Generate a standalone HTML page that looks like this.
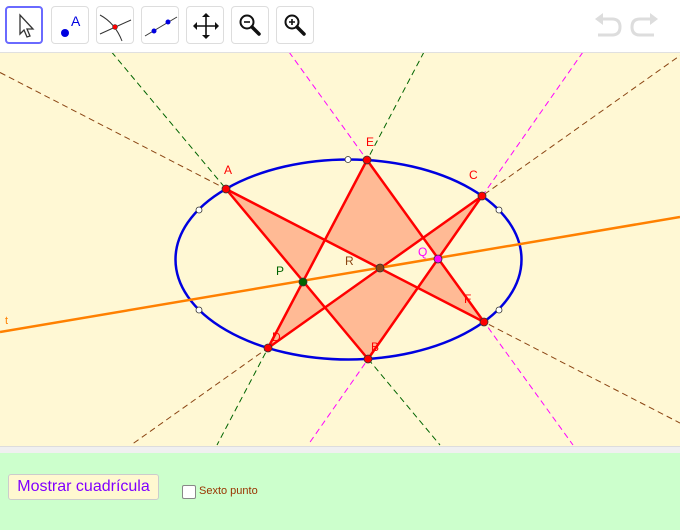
<!DOCTYPE html>
<html><head><meta charset="utf-8"><style>
body{margin:0;width:680px;height:530px;overflow:hidden;font-family:"Liberation Sans",sans-serif;background:#fff;position:relative}
.tb{position:absolute;left:0;top:0;width:680px;height:52px;background:#fff;border-bottom:1px solid #e0e0e0}
.b{position:absolute;top:6px;width:38px;height:38px;border:1px solid #ddd;border-radius:4px;box-sizing:border-box;background:#fff}
.b svg{position:absolute;left:0;top:0}
</style></head><body>
<div class="tb">
<div class="b" style="left:5px;border:2px solid #6a6aff"><svg width="34" height="34"><path d="M13 7 L13 26 L17 22 L20 29 L23 28 L20 21 L26 21 Z" fill="#fff" stroke="#333" stroke-width="1.3"/></svg></div>
<div class="b" style="left:51px"><svg width="38" height="38"><circle cx="13" cy="26" r="4" fill="#0000e0"/><text x="19" y="19" font-size="14" fill="#0000e0" font-family="Liberation Sans">A</text></svg></div>
<div class="b" style="left:96px"><svg width="38" height="38"><path d="M3 8 Q18 16 25 34" stroke="#333" fill="none"/><path d="M3 27 L34 13" stroke="#333"/><circle cx="18" cy="20" r="2.5" fill="red" stroke="#333" stroke-width=".5"/></svg></div>
<div class="b" style="left:141px"><svg width="38" height="38"><path d="M3 29 L35 10" stroke="#333"/><circle cx="12" cy="24" r="2.5" fill="#0000e0"/><circle cx="26" cy="15" r="2.5" fill="#0000e0"/></svg></div>
<div class="b" style="left:186px"><svg width="38" height="38"><path d="M19 8 V30 M8 19 H30" stroke="#111" stroke-width="1.6"/><path d="M19 6 l-4 4 h8z M19 32 l-4 -4 h8z M6 19 l4 -4 v8z M32 19 l-4 -4 v8z" fill="#111"/></svg></div>
<div class="b" style="left:231px"><svg width="38" height="38"><circle cx="15" cy="15" r="6.5" fill="none" stroke="#111" stroke-width="2"/><path d="M12 15 h6" stroke="#111" stroke-width="1.6"/><path d="M20 20 L27 27" stroke="#111" stroke-width="3.5" stroke-linecap="round"/></svg></div>
<div class="b" style="left:276px"><svg width="38" height="38"><circle cx="15" cy="15" r="6.5" fill="none" stroke="#111" stroke-width="2"/><path d="M12 15 h6 M15 12 v6" stroke="#111" stroke-width="1.6"/><path d="M20 20 L27 27" stroke="#111" stroke-width="3.5" stroke-linecap="round"/></svg></div>
<svg style="position:absolute;left:590px;top:10px" width="80" height="32"><path d="M10 9 H22 Q30 9 30 17 Q30 25 22 25 H8" fill="none" stroke="#ddd" stroke-width="3"/><path d="M5 9 l8 -6 v12z" fill="#ddd"/><path d="M60 9 H50 Q42 9 42 17 Q42 25 50 25 H64" fill="none" stroke="#ddd" stroke-width="3"/><path d="M68 9 l-8 -6 v12z" fill="#ddd"/></svg>
</div>
<svg style="position:absolute;left:0;top:53px" width="680" height="393" viewBox="0 53 680 393">
<rect x="0" y="53" width="680" height="393" fill="#fff8d4"/>
<g stroke-dasharray="6,4" stroke-width="1" fill="none">
<line x1="0" y1="72.5" x2="680" y2="423" stroke="#8b4513"/>
<line x1="685" y1="52" x2="131" y2="445" stroke="#8b4513"/>
<line x1="111.6" y1="52" x2="440" y2="445" stroke="#006400"/>
<line x1="424" y1="52" x2="217" y2="445" stroke="#006400"/>
<line x1="289" y1="52" x2="573" y2="445" stroke="#ff00ff"/>
<line x1="583" y1="52" x2="308" y2="445" stroke="#ff00ff"/>
</g>
<polygon points="226,189 484,322 367,160 268,348 482,196 368,359" fill="#ffa07a" fill-opacity=".7" fill-rule="evenodd" stroke="red" stroke-width="2.5" stroke-linejoin="round"/>
<ellipse cx="348.5" cy="259.5" rx="173" ry="100" fill="none" stroke="#0000e0" stroke-width="2.5"/>
<line x1="0" y1="332" x2="680" y2="217" stroke="#ff8000" stroke-width="2.5"/>
<g fill="#fff" stroke="#333" stroke-width=".8">
<circle cx="348" cy="159.5" r="3"/><circle cx="199" cy="210" r="3"/><circle cx="499" cy="210" r="3"/><circle cx="199" cy="310" r="3"/><circle cx="499" cy="310" r="3"/>
</g>
<g fill="red" stroke="#333" stroke-width=".8">
<circle cx="226" cy="189" r="4"/><circle cx="367" cy="160" r="4"/><circle cx="482" cy="196" r="4"/><circle cx="484" cy="322" r="4"/><circle cx="368" cy="359" r="4"/><circle cx="268" cy="348" r="4"/>
</g>
<circle cx="303" cy="282" r="4" fill="#006400" stroke="#333" stroke-width=".8"/>
<circle cx="380" cy="268" r="4" fill="#8b4513" stroke="#333" stroke-width=".8"/>
<circle cx="438" cy="259" r="4" fill="#ff00ff" stroke="#333" stroke-width=".8"/>
<g font-family="Liberation Sans" font-size="12">
<text x="224" y="174" fill="red">A</text><text x="366" y="146" fill="red">E</text><text x="469" y="179" fill="red">C</text><text x="464" y="303" fill="red">F</text><text x="371" y="351" fill="red">B</text><text x="272" y="341" fill="red">D</text>
<text x="276" y="275" fill="#006400">P</text><text x="345" y="265" fill="#8b4513">R</text><text x="418" y="256" fill="#ff00ff">Q</text><text x="5" y="324" fill="#ff8000" font-size="11">t</text>
</g>
</svg>
<div style="position:absolute;left:0;top:446px;width:680px;height:7px;background:#f0f0f0;border-top:1px solid #ddd;box-sizing:border-box"></div>
<div style="position:absolute;left:0;top:453px;width:680px;height:77px;background:#ccffcc"></div>
<div style="position:absolute;left:8px;top:474px;width:151px;height:26px;box-sizing:border-box;background:#fff8d0;border:1px solid #ccc;border-radius:3px;color:#8000ff;font-size:16px;line-height:24px;text-align:center">Mostrar cuadrícula</div>
<div style="position:absolute;left:182px;top:485px;width:12px;height:12px;border:1.5px solid #888;border-radius:2px;background:#fff"></div>
<div style="position:absolute;left:199px;top:485px;font-size:11px;color:#993300">Sexto punto</div>
</body></html>
